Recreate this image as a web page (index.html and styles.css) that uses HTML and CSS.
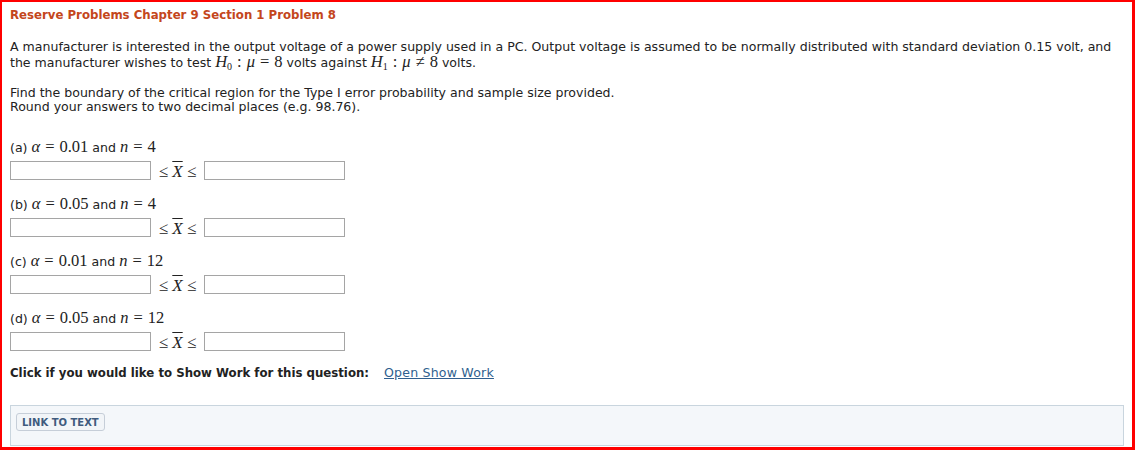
FILE: index.html
```html
<!DOCTYPE html>
<html>
<head>
<meta charset="utf-8">
<link rel="stylesheet" href="styles.css">
</head>
<body>
<div class="frame">
  <h1 class="title">Reserve Problems Chapter 9 Section 1 Problem 8</h1>
  <p class="para">A manufacturer is interested in the output voltage of a power supply used in a PC. Output voltage is assumed to be normally distributed with standard deviation 0.15 volt, and the manufacturer wishes to test <span class="m"><i>H</i><sub>0</sub><span class="op">:</span><i>μ</i><span class="op">=</span>8</span> volts against <span class="m"><i>H</i><sub>1</sub><span class="op">:</span><i>μ</i><span class="op">≠</span>8</span> volts.</p>
  <p class="para2">Find the boundary of the critical region for the Type I error probability and sample size provided.<br>Round your answers to two decimal places (e.g. 98.76).</p>

  <div class="part">
    <div class="label">(a) <span class="m"><i>α</i><span class="op">=</span>0.01</span> and <span class="m"><i>n</i><span class="op">=</span>4</span></div>
    <div class="row"><input class="box" type="text"><span class="rel">≤ <i class="xbar">X</i> ≤</span><input class="box" type="text"></div>
  </div>
  <div class="part">
    <div class="label">(b) <span class="m"><i>α</i><span class="op">=</span>0.05</span> and <span class="m"><i>n</i><span class="op">=</span>4</span></div>
    <div class="row"><input class="box" type="text"><span class="rel">≤ <i class="xbar">X</i> ≤</span><input class="box" type="text"></div>
  </div>
  <div class="part">
    <div class="label">(c) <span class="m"><i>α</i><span class="op">=</span>0.01</span> and <span class="m"><i>n</i><span class="op">=</span>12</span></div>
    <div class="row"><input class="box" type="text"><span class="rel">≤ <i class="xbar">X</i> ≤</span><input class="box" type="text"></div>
  </div>
  <div class="part">
    <div class="label">(d) <span class="m"><i>α</i><span class="op">=</span>0.05</span> and <span class="m"><i>n</i><span class="op">=</span>12</span></div>
    <div class="row"><input class="box" type="text"><span class="rel">≤ <i class="xbar">X</i> ≤</span><input class="box" type="text"></div>
  </div>

  <div class="showwork"><b>Click if you would like to Show Work for this question:</b><a class="swlink" href="#">Open Show Work</a></div>

  <div class="footer"><span class="btn">LINK TO TEXT</span></div>
</div>
</body>
</html>
```

FILE: styles.css
```css
html, body {
  margin: 0;
  padding: 0;
  background: #fff;
}
.frame {
  width: 1135px;
  height: 450px;
  box-sizing: border-box;
  border-style: solid;
  border-color: #ff0000;
  border-width: 2px 3px 3px 2px;
  padding: 0 8px;
  font-family: "DejaVu Sans", Verdana, sans-serif;
  font-size: 12.55px;
  color: #222;
  overflow: hidden;
}
.title {
  margin: 5px 0 0;
  font-size: 11.75px;
  line-height: 16px;
  font-weight: bold;
  color: #c4461c;
}
.para {
  margin: 16px 0 0;
  line-height: 15px;
}
.m {
  font-family: "Liberation Serif", "Times New Roman", serif;
  font-size: 16.5px;
  line-height: 1;
}
.m sub {
  font-size: 10px;
  vertical-align: -3px;
  line-height: 0;
}
.op {
  margin: 0 5px;
}
.para2 {
  margin: 15px 0 0;
  line-height: 14px;
}
.part {
  display: flex;
  flex-direction: column;
  gap: 5px;
}
.part + .part {
  margin-top: 14px;
}
.part:first-of-type {
  margin-top: 24px;
}
.label {
  line-height: 20px;
  height: 18px;
}
.row {
  display: flex;
  align-items: center;
  height: 20px;
}
.box {
  width: 141px;
  height: 19px;
  box-sizing: border-box;
  border: 1px solid #a5a5a5;
  margin: 0;
  padding: 0 2px;
  font: inherit;
  background: #fff;
}
.rel {
  font-family: "Liberation Serif", "Times New Roman", serif;
  font-size: 17px;
  padding-top: 3px;
  width: 53px;
  box-sizing: border-box;
  text-align: center;
  white-space: nowrap;
}
.xbar {
  text-decoration: overline;
}
.showwork {
  margin-top: 12px;
  line-height: 18px;
}
.showwork b {
  font-size: 11.75px;
}
.swlink {
  margin-left: 15px;
  color: #2f5f8f;
  text-decoration: underline;
  letter-spacing: 0.2px;
}
.footer {
  margin-top: 23px;
  height: 41px;
  box-sizing: border-box;
  border: 1px solid #c9d5de;
  background: #f4f7fa;
  padding: 7px 5px;
}
.btn {
  display: inline-block;
  height: 18px;
  line-height: 17px;
  box-sizing: border-box;
  padding: 0 5px;
  border: 1px solid #c6ced8;
  border-radius: 3px;
  background: #f2f5f8;
  color: #3f5b7e;
  font-size: 10px;
  font-weight: bold;
}
```
